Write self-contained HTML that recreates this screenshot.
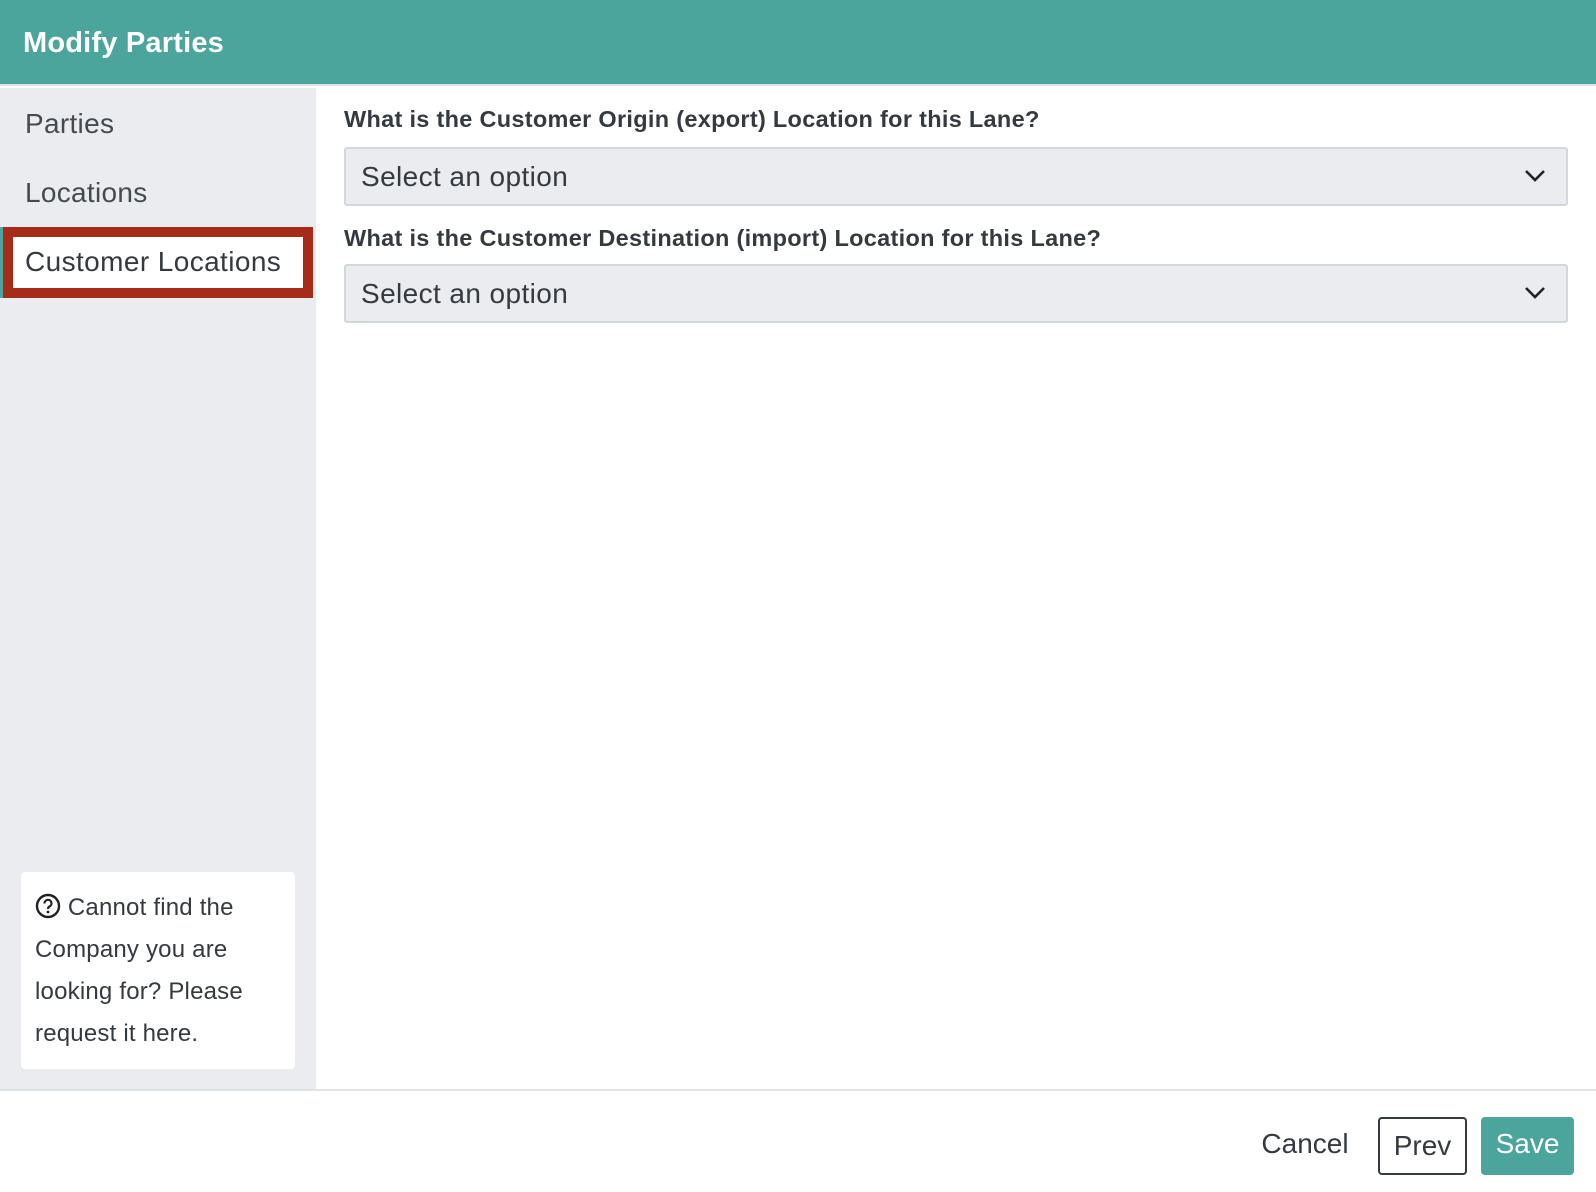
<!DOCTYPE html>
<html><head><meta charset="utf-8"><style>
*{box-sizing:border-box;margin:0;padding:0}
body{width:1596px;height:1192px;font-family:"Liberation Sans",sans-serif;color:#343a40;background:#fff;position:relative;overflow:hidden}
.hdr{position:absolute;left:0;top:0;width:1596px;height:86px;background:#4ba59d;border-bottom:2px solid #dfe3e6}
.hdr h1{position:absolute;left:23px;top:27px;font-size:29px;font-weight:bold;color:#fff;letter-spacing:0.2px}
.side{position:absolute;left:0;top:88px;width:316px;height:1001px;background:#ebecf0}
.nav{position:absolute;left:25px;font-size:28px;color:#444a50;letter-spacing:0.3px}
.sel{position:absolute;left:3px;top:227px;width:310px;height:71px;border:10px solid #a62b19;background:#fff;box-shadow:-3px 0 0 #4ba59d}
.sel span{position:absolute;left:12px;top:9px;font-size:28px;color:#343a40;letter-spacing:0.4px}
.help{position:absolute;left:21px;top:872px;width:274px;height:197px;background:#fff;border-radius:4px;padding:15px 0 0 14px;font-size:24px;line-height:42px;color:#343a40;letter-spacing:0.2px}
.lbl{position:absolute;left:344px;font-size:23.5px;font-weight:bold;color:#343a40;letter-spacing:0.3px}
.box{position:absolute;left:344px;width:1224px;height:59px;background:#ebecf0;border:2px solid #d3d6da;border-radius:3px}
.box span{position:absolute;left:15px;top:12px;font-size:28px;color:#343a40;letter-spacing:0.4px}
.box svg{position:absolute;right:20px;top:20px}
.foot{position:absolute;left:0;top:1089px;width:1596px;height:2px;background:#dfe3e6}
.btn{position:absolute;top:1117px;height:58px;font-size:28px;line-height:54px;text-align:center;border-radius:4px}
</style></head><body>
<div class="hdr"><h1>Modify Parties</h1></div>
<div class="side">
<div class="nav" style="top:20px">Parties</div>
<div class="nav" style="top:89px">Locations</div>
</div>
<div class="sel"><span>Customer Locations</span></div>
<div class="help"><svg width="26" height="26" viewBox="0 0 26 26" style="vertical-align:-4px"><circle cx="13" cy="13" r="11" fill="none" stroke="#222" stroke-width="2.4"/><path d="M9.5 10.5a3.5 3.5 0 1 1 5 3c-1.2.6-1.5 1.2-1.5 2.5" fill="none" stroke="#222" stroke-width="2.2"/><circle cx="13" cy="19" r="1.4" fill="#222"/></svg> Cannot find the<br>Company you are<br>looking for? Please<br>request it here.</div>
<div class="lbl" style="top:106px">What is the Customer Origin (export) Location for this Lane?</div>
<div class="box" style="top:147px"><span>Select an option</span><svg width="22" height="14" viewBox="0 0 22 14"><path d="M2 2l9 9 9-9" fill="none" stroke="#222" stroke-width="2.6"/></svg></div>
<div class="lbl" style="top:225px">What is the Customer Destination (import) Location for this Lane?</div>
<div class="box" style="top:264px"><span>Select an option</span><svg width="22" height="14" viewBox="0 0 22 14"><path d="M2 2l9 9 9-9" fill="none" stroke="#222" stroke-width="2.6"/></svg></div>
<div class="foot"></div>
<div class="btn" style="left:1255px;width:100px;color:#343a40">Cancel</div>
<div class="btn" style="left:1378px;width:89px;border:2px solid #343a40;color:#343a40">Prev</div>
<div class="btn" style="left:1481px;width:93px;background:#4ba59d;color:#fff">Save</div>
</body></html>
